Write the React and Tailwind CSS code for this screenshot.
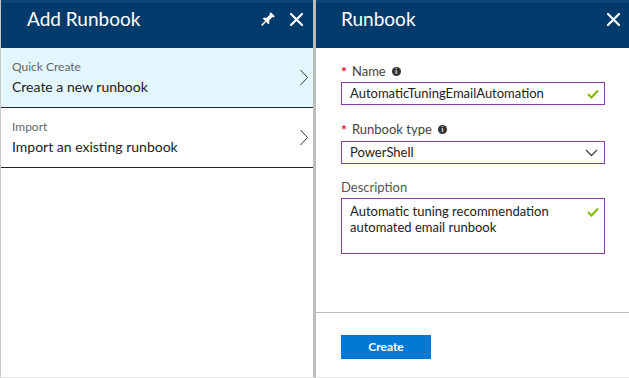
import React from 'react';

const font = { fontFamily: 'Lato, "Noto Sans", sans-serif' };

function CloseIcon() {
  return (
    <svg width="13" height="13" viewBox="0 0 13 13" className="text-white">
      <path d="M1 1 L12 12 M12 1 L1 12" stroke="currentColor" strokeWidth="2.2" strokeLinecap="square" />
    </svg>
  );
}

function PinIcon() {
  return (
    <svg width="17" height="17" viewBox="0 0 16 16" className="text-white">
      <g transform="rotate(45 8 8)">
        <path d="M5.3 1 H10.7 V2.6 L9.7 3.1 V7.3 L11.8 9.4 V10.6 H4.2 V9.4 L6.3 7.3 V3.1 L5.3 2.6 Z" fill="currentColor" />
        <path d="M8 10.6 V15.8" stroke="currentColor" strokeWidth="1.5" />
      </g>
    </svg>
  );
}

function Chevron() {
  return (
    <svg width="10" height="17" viewBox="0 0 10 17" className="text-[#333]">
      <path d="M1.5 1 L8.5 8.5 L1.5 16" fill="none" stroke="currentColor" strokeWidth="1" />
    </svg>
  );
}

function CheckMark() {
  return (
    <svg width="12" height="10" viewBox="0 0 12 10" className="text-[#7fba00]">
      <path d="M1 5 L4.5 8.5 L11 1.5" fill="none" stroke="currentColor" strokeWidth="2" />
    </svg>
  );
}

function Label({ text, required }) {
  return (
    <div className="h-[14px] flex items-center text-[13px] text-[#444] leading-none">
      {required && <span className="text-[#e81123] text-[14px] font-bold mr-[5px] mt-[2px]">*</span>}
      <span>{text}</span>
      {required && (
        <span className="ml-[6px] w-[9px] h-[9px] rounded-full bg-[#333] text-white text-[7px] font-bold flex items-center justify-center leading-none">i</span>
      )}
    </div>
  );
}

function NavRow({ title, subtitle, active }) {
  return (
    <div className={`flex items-center h-[60px] pl-[11px] pr-[4px] border-b border-[#222] ${active ? 'bg-[#e3f5fd]' : 'bg-white'}`}>
      <div className="flex-1">
        <div className="text-[12px] text-[#666] leading-[16px]">{subtitle}</div>
        <div className="text-[14px] text-[#222] leading-[20px] mt-[2px]">{title}</div>
      </div>
      <Chevron />
    </div>
  );
}

export default function App() {
  return (
    <div className="w-[629px] h-[378px] flex bg-white overflow-hidden" style={font}>
      {/* Add Runbook blade */}
      <div className="w-[316px] flex flex-col border-l border-[#c8c8c8] border-r-[3px] border-r-[#bdbdbd] border-b border-b-[#e6e6e6]">
        <div className="h-[48px] bg-[#003b6c] border-t-[3px] border-t-[#0b4677] flex items-start pt-[6px] pl-[26px] pr-[10px]">
          <div className="flex-1 text-white text-[19px] leading-[20px]">Add Runbook</div>
          <div className="mt-[2px] mr-[14px]"><PinIcon /></div>
          <div className="mt-[4px]"><CloseIcon /></div>
        </div>
        <NavRow subtitle="Quick Create" title="Create a new runbook" active />
        <NavRow subtitle="Import" title="Import an existing runbook" />
        <div className="flex-1" />
      </div>

      {/* Runbook blade */}
      <div className="flex-1 flex flex-col border-b border-b-[#e6e6e6]">
        <div className="h-[48px] bg-[#003b6c] border-t-[3px] border-t-[#0b4677] flex items-start pt-[6px] pl-[25px] pr-[9px]">
          <div className="flex-1 text-white text-[19px] leading-[20px]">Runbook</div>
          <div className="mt-[4px]"><CloseIcon /></div>
        </div>
        <div className="flex-1 pl-[25px] pr-[24px] pt-[16px]">
          <Label text="Name" required />
          <div className="mt-[4px] h-[23px] border border-[#8a3fa7] flex items-center pl-[8px] pr-[5px]">
            <span className="flex-1 text-[13px] text-[#222]">AutomaticTuningEmailAutomation</span>
            <CheckMark />
          </div>
          <div className="mt-[17px]">
            <Label text="Runbook type" required />
          </div>
          <div className="mt-[5px] h-[23px] border border-[#8a3fa7] flex items-center pl-[8px] pr-[6px]">
            <span className="flex-1 text-[13px] text-[#222]">PowerShell</span>
            <svg width="13" height="8" viewBox="0 0 13 8" className="text-[#444]">
              <path d="M1 1 L6.5 6.5 L12 1" fill="none" stroke="currentColor" strokeWidth="1.3" />
            </svg>
          </div>
          <div className="mt-[16px] h-[14px] flex items-center text-[13px] text-[#555] leading-none">Description</div>
          <div className="mt-[4px] h-[56px] border border-[#8a3fa7] flex items-start pl-[8px] pr-[5px] pt-[4px]">
            <span className="flex-1 text-[13px] text-[#222] leading-[16px]">Automatic tuning recommendation<br />automated email runbook</span>
            <div className="mt-[4px]"><CheckMark /></div>
          </div>
        </div>
        <div className="h-[65px] border-t border-[#bdbdbd] pl-[25px] pt-[20px]">
          <button className="w-[90px] h-[24px] bg-[#0078d4] text-white text-[12px] font-bold">Create</button>
        </div>
      </div>
    </div>
  );
}
